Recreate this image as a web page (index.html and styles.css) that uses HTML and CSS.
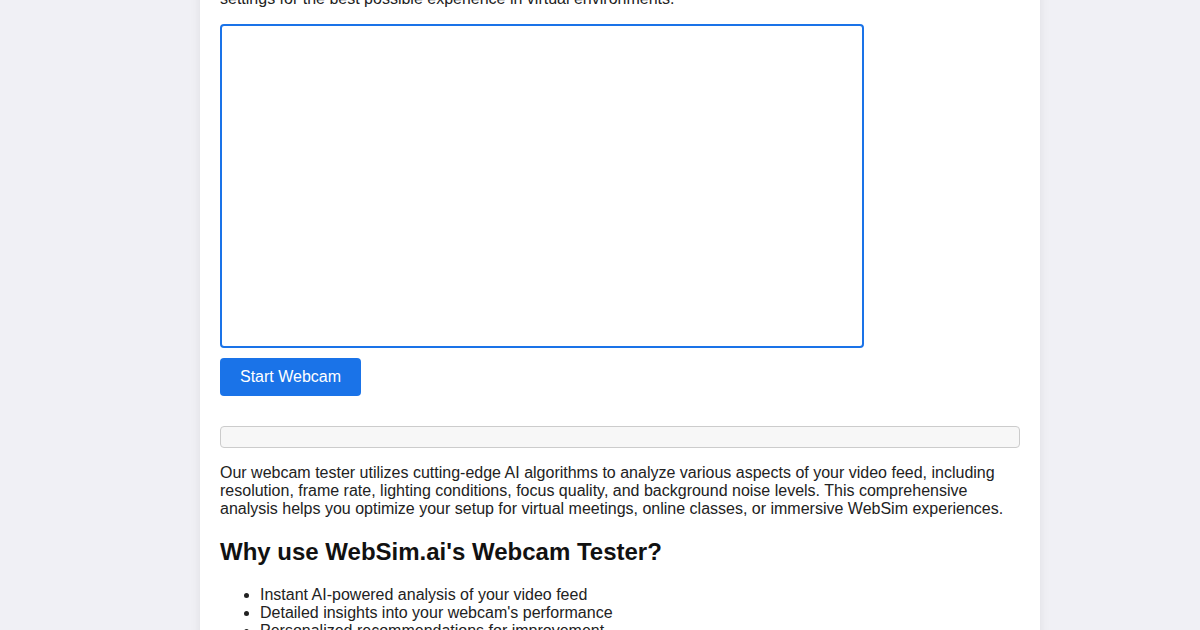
FILE: index.html
```html
<!DOCTYPE html>
<html lang="en">
<head>
<meta charset="utf-8">
<title>WebSim.ai Webcam Tester</title>
<link rel="stylesheet" href="styles.css">
</head>
<body>
<div class="page">
  <main class="card">
    <p class="intro">Check your camera in seconds: WebSim.ai looks at your live video and suggests how to adjust your<br>settings for the best possible experience in virtual environments.</p>

    <div class="video-frame"></div>

    <button class="btn-start" type="button">Start Webcam</button>

    <div class="analysis-bar"></div>

    <p>Our webcam tester utilizes cutting-edge AI algorithms to analyze various aspects of your video feed, including resolution, frame rate, lighting conditions, focus quality, and background noise levels. This comprehensive analysis helps you optimize your setup for virtual meetings, online classes, or immersive WebSim experiences.</p>

    <h2>Why use WebSim.ai's Webcam Tester?</h2>
    <ul>
      <li>Instant AI-powered analysis of your video feed</li>
      <li>Detailed insights into your webcam's performance</li>
      <li>Personalized recommendations for improvement</li>
      <li>Compatible with all major browsers and devices</li>
    </ul>
  </main>
</div>
</body>
</html>
```

FILE: styles.css
```css
html, body {
  margin: 0;
  padding: 0;
}

body {
  background: #f0f0f5;
  font-family: "Liberation Sans", Arial, sans-serif;
  font-size: 16px;
  color: #222;
  overflow: hidden;
}

.page {
  padding-left: 200px;
}

.card {
  width: 800px;
  padding: 20px;
  margin-top: -48px;
  background: #fff;
  box-shadow: 0 0 10px rgba(0, 0, 0, 0.08);
}

.card p {
  margin: 16px 0;
}

.card .intro {
  margin-top: 0;
}

.video-frame {
  width: 640px;
  height: 320px;
  border: 2px solid #1a73e8;
  border-radius: 4px;
  background: #fff;
}

.btn-start {
  display: block;
  margin-top: 10px;
  padding: 10px 20px;
  height: 38px;
  border: none;
  border-radius: 4px;
  background: #1a73e8;
  color: #fff;
  font-family: inherit;
  font-size: 16px;
  line-height: 18px;
  cursor: pointer;
}

.analysis-bar {
  margin-top: 30px;
  height: 20px;
  border: 1px solid #ccc;
  border-radius: 4px;
  background: #f7f7f7;
}

h2 {
  margin: 20px 0;
  font-size: 24px;
  line-height: 28px;
  color: #111;
}

ul {
  margin: 20px 0;
  padding-left: 40px;
}

li {
  line-height: 18px;
}
```
